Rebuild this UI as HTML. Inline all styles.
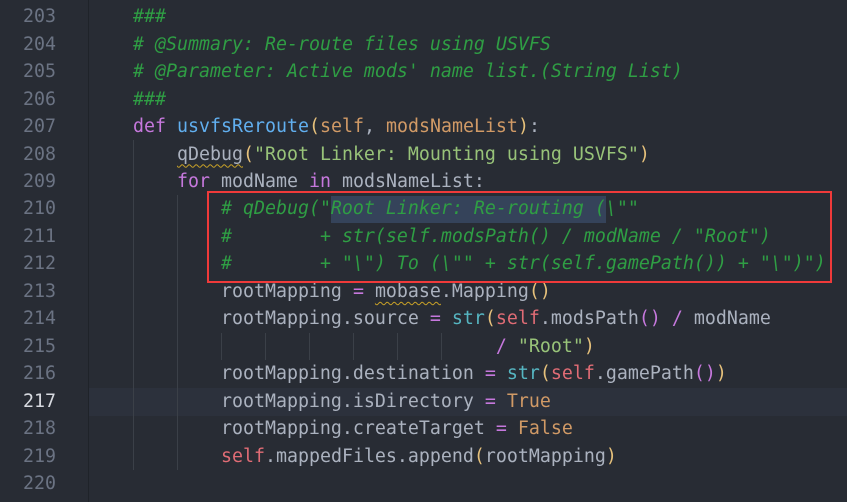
<!DOCTYPE html>
<html><head><meta charset="utf-8"><style>
html,body{margin:0;padding:0;width:847px;height:502px;overflow:hidden;background:#282c34;}
body{position:relative;font-family:"DejaVu Sans Mono","Liberation Mono",monospace;font-size:18.27px;}
.ln{position:absolute;left:0;width:56px;text-align:right;color:#6b7383;height:27.45px;line-height:27.45px;}
.c{position:absolute;left:89px;white-space:pre;color:#abb2bf;height:27.45px;line-height:27.45px;}
.gut{position:absolute;left:88px;top:0;width:1px;height:502px;background:#1f2329;}
.g{position:absolute;width:1px;background:#3b4048;}
.k{color:#c678dd}.f{color:#61afef}.p{color:#d19a66}.s{color:#98c379}.sf{color:#e06c75}.b{color:#e5c07b}.cy{color:#56b6c2}
.cm{color:#2f9e44;font-style:italic}.h{color:#2f9e44}
.sq{text-decoration:underline wavy #c9a227;text-decoration-thickness:1px;text-underline-offset:4px}
</style></head><body>
<div style="position:absolute;left:88px;top:388px;width:759px;height:27.5px;background:#2c313c"></div>
<div class="gut"></div>
<div class="g" style="left:133px;top:140px;height:330px"></div>
<div class="g" style="left:177px;top:195px;height:275px"></div>
<div class="g" style="left:221px;top:333px;height:27px"></div>
<div class="g" style="left:265px;top:333px;height:27px"></div>
<div class="g" style="left:309px;top:333px;height:27px"></div>
<div class="g" style="left:353px;top:333px;height:27px"></div>
<div class="g" style="left:397px;top:333px;height:27px"></div>
<div class="g" style="left:441px;top:333px;height:27px"></div>
<div style="position:absolute;left:331px;top:196px;width:275px;height:27px;background:#35435a"></div>

<div class="ln" style="top:3.3px">203</div>
<div class="ln" style="top:30.75px">204</div>
<div class="ln" style="top:58.2px">205</div>
<div class="ln" style="top:85.65px">206</div>
<div class="ln" style="top:113.1px">207</div>
<div class="ln" style="top:140.55px">208</div>
<div class="ln" style="top:168px">209</div>
<div class="ln" style="top:195.45px">210</div>
<div class="ln" style="top:222.9px">211</div>
<div class="ln" style="top:250.35px">212</div>
<div class="ln" style="top:277.8px">213</div>
<div class="ln" style="top:305.25px">214</div>
<div class="ln" style="top:332.7px">215</div>
<div class="ln" style="top:360.15px">216</div>
<div class="ln" style="top:387.6px;color:#d7dae0">217</div>
<div class="ln" style="top:415.05px">218</div>
<div class="ln" style="top:442.5px">219</div>
<div class="ln" style="top:469.95px">220</div>

<div class="c" style="top:3.3px">    <span class="h">###</span></div>
<div class="c" style="top:30.75px">    <span class="cm"># @Summary: Re-route files using USVFS</span></div>
<div class="c" style="top:58.2px">    <span class="cm"># @Parameter: Active mods' name list.(String List)</span></div>
<div class="c" style="top:85.65px">    <span class="h">###</span></div>
<div class="c" style="top:113.1px">    <span class="k">def</span> <span class="f">usvfsReroute</span><span class="b">(</span><span class="p">self</span>, <span class="p">modsNameList</span><span class="b">)</span>:</div>
<div class="c" style="top:140.55px">        <span class="sq">qDebug</span><span class="b">(</span><span class="s">"Root Linker: Mounting using USVFS"</span><span class="b">)</span></div>
<div class="c" style="top:168px">        <span class="k">for</span> modName <span class="k">in</span> modsNameList:</div>
<div class="c" style="top:195.45px">            <span class="cm"># qDebug("Root Linker: Re-routing (\""</span></div>
<div class="c" style="top:222.9px">            <span class="cm">#        + str(self.modsPath() / modName / "Root")</span></div>
<div class="c" style="top:250.35px">            <span class="cm">#        + "\") To (\"" + str(self.gamePath()) + "\")")</span></div>
<div class="c" style="top:277.8px">            rootMapping <span class="k">=</span> <span class="sq">mobase</span>.Mapping<span class="b">()</span></div>
<div class="c" style="top:305.25px">            rootMapping.source <span class="k">=</span> <span class="cy">str</span><span class="b">(</span><span class="sf">self</span>.modsPath<span class="k">()</span> <span class="k">/</span> modName</div>
<div class="c" style="top:332.7px">                                     <span class="k">/</span> <span class="s">"Root"</span><span class="b">)</span></div>
<div class="c" style="top:360.15px">            rootMapping.destination <span class="k">=</span> <span class="cy">str</span><span class="b">(</span><span class="sf">self</span>.gamePath<span class="k">()</span><span class="b">)</span></div>
<div class="c" style="top:387.6px">            rootMapping.isDirectory <span class="k">=</span> <span class="p">True</span></div>
<div class="c" style="top:415.05px">            rootMapping.createTarget <span class="k">=</span> <span class="p">False</span></div>
<div class="c" style="top:442.5px">            <span class="sf">self</span>.mappedFiles.append<span class="b">(</span>rootMapping<span class="b">)</span></div>

<div style="position:absolute;left:207px;top:191px;width:621px;height:88px;border:2px solid #f03a3a"></div>
</body></html>
